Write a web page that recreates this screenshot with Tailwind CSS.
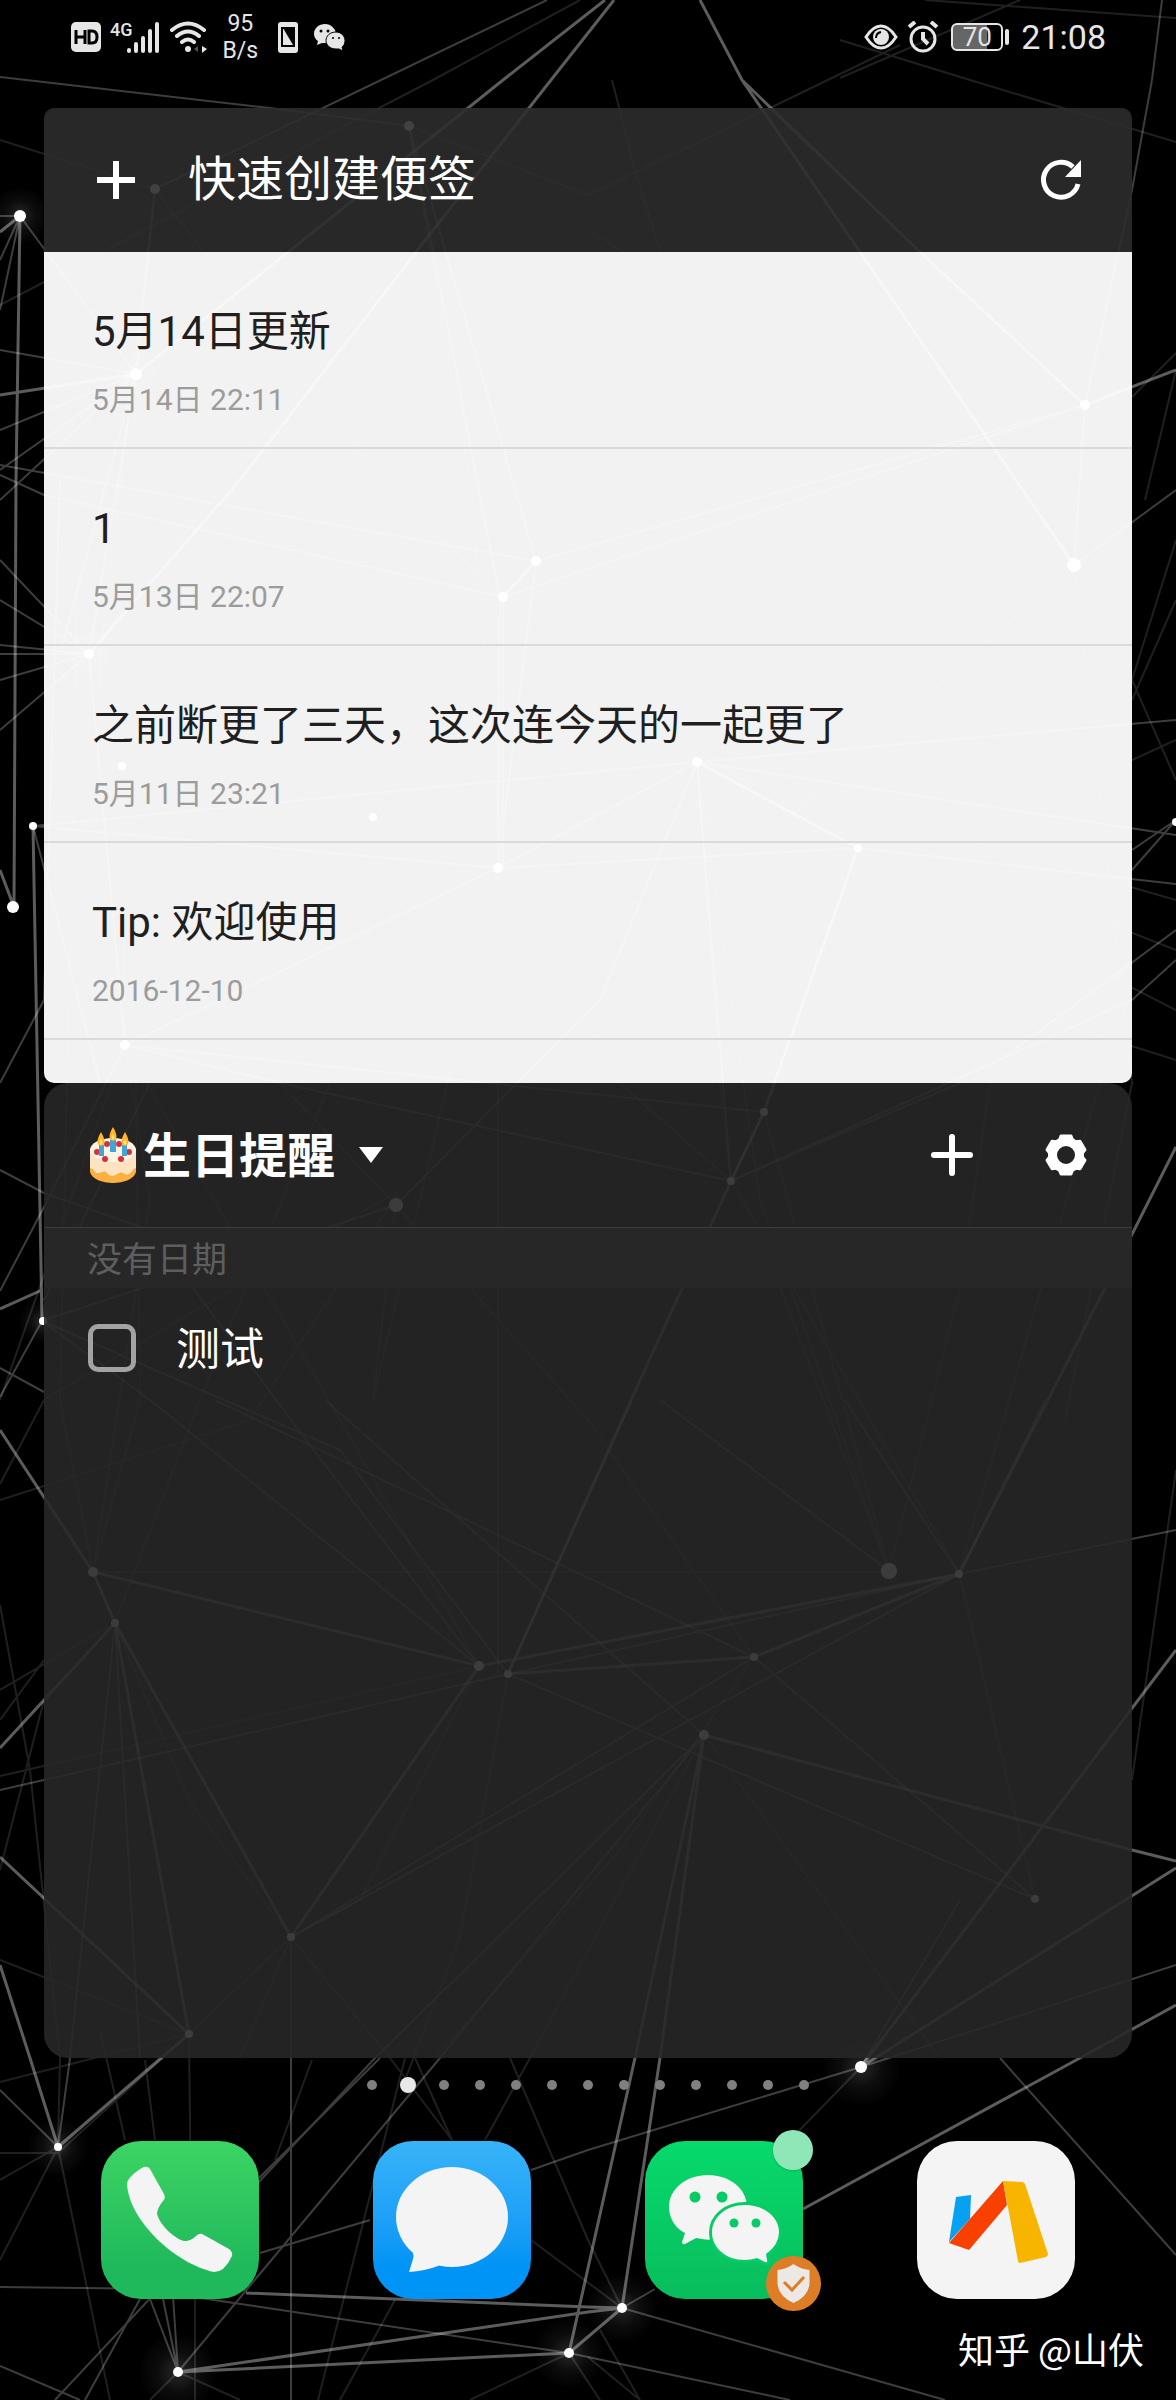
<!DOCTYPE html>
<html lang="zh-CN">
<head>
    <meta charset="UTF-8">
    <meta name="viewport" content="width=device-width, initial-scale=1.0">
    <script src="https://cdn.jsdelivr.net/npm/@tailwindcss/browser@4"></script>
    <title>桌面</title>
</head>
<body class="bg-black font-['Roboto','Noto_Sans_CJK_SC',sans-serif] text-white">
<div class="relative isolate flex min-h-screen flex-col overflow-hidden">

    <!-- wallpaper -->
    <svg class="absolute inset-0 -z-10 h-full w-full" viewBox="0 0 1176 2400" preserveAspectRatio="xMidYMin slice" fill="none" stroke="#fff" aria-hidden="true">
        <defs>
            <radialGradient id="glow">
                <stop offset="0" stop-color="#fff" stop-opacity=".16"/>
                <stop offset=".5" stop-color="#fff" stop-opacity=".05"/>
                <stop offset="1" stop-color="#fff" stop-opacity="0"/>
            </radialGradient>
        </defs>
        <!-- faint -->
        <g stroke-width="2" opacity=".12">
            <path d="M0 140L155 189M0 305L433 80L580 0M925 0L1176 18M840 40L970 80L1176 142M840 78L1020 0M588 195L770 108L900 45M612 80L635 170L715 430M155 189L380 480L503 597M155 189L100 654L93 1000M409 126L470 480L503 868M1132 397L1176 353M1176 370L1145 500"/>
            <path d="M588 230L970 470M409 126L588 195M89 654L409 252M1074 565L1132 1083L1065 1420M1074 565L697 900M536 561L764 900M697 762L1176 900M697 762L1176 950M858 848L1176 1010M1176 540L1132 680L1176 780M1176 600L1132 700M1132 760L1176 740"/>
            <path d="M498 868L860 960L1176 1060M498 868L373 1400L396 1205M498 868L620 1083L731 1181M498 868V1674M697 762L720 1083L731 1181M697 762L760 1200L889 1571M122 766L125 1045M80 480L60 1400L93 1572M125 1045L0 1400M125 1045L150 1200L93 1572M136 1083L140 1400L93 1572M125 1045L340 1420L479 1666M280 1083L396 1205L588 1420L754 1657M330 1083L200 1400L115 1623"/>
            <path d="M731 1181L960 1574L1035 1899M764 1112L889 1571M780 1288L889 1571M990 1083L960 1288L889 1571M1100 1083L959 1574M0 1500L250 1420L400 1190M0 1484L44 1400L400 1190M93 1572H889M115 1623L0 1690M93 1572L189 1800L291 1937M0 1605L30 1770L60 2058L58 2147M0 1776L479 1666M0 1720L44 1660M0 1870L44 1700"/>
            <path d="M754 1657L620 1850L435 2058M704 1735L530 2058M704 1735L940 2058M508 1674L460 1937L405 2080M479 1666L360 1900L291 1937L189 2034M291 1937L390 2058L452 2140M959 1574L1035 1899M1176 1470L1132 1780M291 1937L240 2058M0 1960L189 2034M0 2082L189 2034M0 2153H58L189 2034M0 2180L58 2147M189 2034L192 2299M100 2030L125 2140M145 2060L155 2140"/>
            <path d="M58 2147L110 2400M58 2147L0 2260M415 2058L452 2140M530 2058L485 2140M510 2058L588 2240M405 2058L318 2400M312 2060L275 2160M531 2240L622 2308M395 2300L340 2400M178 2372L240 2400M178 2372L150 2400M569 2353L470 2400M569 2353L600 2400M640 2400L600 2330M861 2067L790 2140M588 2240L622 2308M195 2299L195 2400M588 2357L640 2400"/>
        </g>
        <!-- middle -->
        <g stroke-width="2" opacity=".24">
            <path d="M0 77L270 108L409 126M155 189L381 80L547 0M1152 80L1162 0M1152 80L1132 190L1085 405M409 126L500 600L498 868M409 126L536 561M20 216H0M20 216L0 260M20 216L0 310M20 216L136 374M136 374L0 350M136 374L0 430M136 374L0 470M136 374L60 654M155 189L136 374M136 374L0 500"/>
            <path d="M0 465L536 561M0 475L44 495L503 597M536 561L1085 405L503 597M536 561L498 868M503 597V868M1085 405L1074 565M1074 565L1176 490M89 654L0 560M89 654L0 600M89 654L0 645M89 654H0M89 654L0 680M89 654L0 730M89 654L136 374M33 826L697 762L1176 720M697 762L498 868M697 762L1176 835M858 848L1176 884M1176 820L1132 870M1176 820L1132 850M1176 960L1132 1000L731 1181"/>
            <path d="M33 826L498 868L858 848M33 826L100 1083M498 868L125 1045M125 1045L764 1112M125 1045L280 1083L731 1181M697 762L731 1181M89 654L125 1045M60 480L44 1000L0 1083M0 1170L44 1193L150 1230L291 1420L479 1666M764 1112L731 1181L1000 1060L1176 930M731 1181L960 1083M42 1321L0 1397M0 1368L44 1392M0 1291L44 1207L125 1045M42 1321L396 1205L600 1000L697 762M42 1321L150 1400L479 1666"/>
            <path d="M150 1083L44 1300M42 1321L340 1450L508 1674M325 1400L704 1735M215 1400L754 1657M632 1400L508 1674M660 1400L889 1571M845 1400L959 1574M1045 1400L959 1574L1176 1530M959 1574L291 1937M754 1657L291 1937M508 1674L1035 1899L754 1657M0 1790L508 1674L959 1574M115 1623L70 2058L58 2147M115 1623L140 2058M704 1735L375 2058L55 2400M704 1735L440 2058L178 2372"/>
            <path d="M380 2058L259 2178M260 2253L370 2220M531 2170L588 2150L861 2067M0 2090L58 2147M178 2372L150 2299M178 2372L163 2299M178 2372L170 2250M0 2366L80 2400M85 2400L140 2299M0 2287L246 2290M200 2298L569 2353L588 2357L790 2400M622 2308L945 2400M1000 2058L1176 2255M1176 1965L861 2067M861 2067L960 1900M622 2308L655 2289M291 1937V2400"/>
        </g>
        <!-- bright -->
        <g stroke-width="3" opacity=".36">
            <path d="M605 0L503 80L136 374M614 0L551 80L416 252L240 480L89 654M700 0L742 80L860 252L1074 565M742 80L920 252L1085 405L1176 370M20 216L16 480L14 907L0 870M20 216L0 232M136 374L0 395M503 597L536 561M33 826L42 1321M858 848L764 1112L731 1181M697 762L858 848M0 1309L42 1290M1176 1147L1105 1288L959 1574M731 1181L622 1420L508 1674"/>
            <path d="M0 1430L93 1572L479 1666L959 1574L754 1657L508 1674M93 1572L115 1623L0 1748M115 1623L291 1937M115 1623L189 2034M479 1666L291 1937M704 1735L1132 1850L1176 1861M1176 1650L861 2067L1176 1868M1176 2005L1080 2058L803 2209M0 1857L189 2034L58 2147M0 1965L30 2058L58 2147M704 1735L635 2058L569 2353M704 1735L660 2058L622 2308"/>
            <path d="M178 2372L569 2353L622 2308M178 2372L588 2312L622 2308M246 2293L588 2307L622 2308"/>
        </g>
        <g fill="url(#glow)" stroke="none">
            <circle cx="20" cy="216" r="30"/><circle cx="136" cy="374" r="50"/><circle cx="89" cy="654" r="50"/><circle cx="58" cy="2147" r="30"/>
            <circle cx="178" cy="2372" r="40"/><circle cx="569" cy="2353" r="36"/><circle cx="622" cy="2308" r="36"/><circle cx="861" cy="2067" r="40"/>
            <circle cx="42" cy="1321" r="24"/><circle cx="889" cy="1571" r="16"/><circle cx="396" cy="1205" r="14"/>
        </g>
        <g fill="#fff" stroke="none">
            <circle cx="20" cy="216" r="6"/><circle cx="136" cy="374" r="6"/><circle cx="409" cy="126" r="5"/><circle cx="155" cy="189" r="5"/>
            <circle cx="1085" cy="405" r="5"/><circle cx="536" cy="561" r="5"/><circle cx="503" cy="597" r="5"/><circle cx="1074" cy="565" r="7"/>
            <circle cx="89" cy="654" r="5"/><circle cx="33" cy="826" r="4"/><circle cx="122" cy="766" r="4"/><circle cx="373" cy="817" r="4"/>
            <circle cx="13" cy="907" r="6"/><circle cx="697" cy="762" r="5"/><circle cx="498" cy="868" r="5"/><circle cx="858" cy="848" r="4"/>
            <circle cx="125" cy="1045" r="5"/><circle cx="396" cy="1205" r="7"/><circle cx="764" cy="1112" r="4"/><circle cx="731" cy="1181" r="4"/>
            <circle cx="43" cy="1321" r="4"/><circle cx="93" cy="1572" r="5"/><circle cx="115" cy="1623" r="4"/><circle cx="479" cy="1666" r="5"/>
            <circle cx="508" cy="1674" r="4"/><circle cx="754" cy="1657" r="4"/><circle cx="889" cy="1571" r="8"/><circle cx="959" cy="1574" r="4"/>
            <circle cx="704" cy="1735" r="5"/><circle cx="1035" cy="1899" r="4"/><circle cx="291" cy="1937" r="4"/><circle cx="189" cy="2034" r="4"/>
            <circle cx="861" cy="2067" r="6"/><circle cx="58" cy="2147" r="4"/><circle cx="178" cy="2372" r="5"/><circle cx="569" cy="2353" r="5"/>
            <circle cx="622" cy="2308" r="5"/><circle cx="1176" cy="822" r="4"/>
        </g>
    </svg>

    <!-- status bar -->
    <header class="flex h-[108px] items-start justify-between px-[70px] text-[#e6e6e6]">
        <div class="flex h-[74px] items-center">
            <svg class="mr-2 size-8" viewBox="0 0 32 32" role="img" aria-label="HD">
                <rect x="1" y="1" width="30" height="30" rx="5" fill="currentColor"/>
                <path d="M6 9v14M15 9v14M6 16h9M19 10v12h3q5 0 5-6t-5-6z" fill="none" stroke="#000" stroke-width="3"/>
            </svg>
            <div class="mr-2 flex">
                <span class="-mr-2 text-[18px] leading-none font-medium">4G</span>
                <svg class="h-8 w-9" viewBox="0 0 36 32" fill="none" stroke="currentColor" stroke-width="4" stroke-linecap="round" aria-hidden="true">
                    <path d="M4 29v1M11 23v7M18 17v13M25 10v20M32 3v27"/>
                </svg>
            </div>
            <svg class="h-8 w-[38px]" viewBox="0 0 38 32" fill="none" stroke="currentColor" stroke-width="4" stroke-linecap="round" aria-hidden="true">
                <path d="M3 9Q19-4 35 9M8 15Q19 6 30 15M13 21Q19 16 25 21"/>
                <circle cx="19" cy="28" r="3" fill="currentColor" stroke="none"/>
                <path d="M33 25l5 3-5 4z" fill="currentColor" stroke="none"/>
                <path d="M25 28l4-3v6z" fill="#555" stroke="none"/>
            </svg>
            <p class="mx-4 text-center text-[23px] leading-[27px]">95<br>B/s</p>
            <svg class="ml-1 h-8 w-5" viewBox="0 0 20 32" aria-hidden="true">
                <rect y="1" width="20" height="31" rx="3" fill="currentColor"/>
                <path d="M4 7h12v18H4z" fill="none" stroke="#000" stroke-width="2"/>
                <path d="M5 7l10 17V7z" fill="#000"/>
            </svg>
            <svg class="ml-4 h-7 w-8" viewBox="0 0 32 28" fill="currentColor" aria-hidden="true">
                <path d="M11 1C5 1 0 5 0 11c0 3 2 6 4 7l-1 4 5-2h3C18 20 22 16 22 11S17 1 11 1z"/>
                <path d="M22 9c-6 0-10 4-10 8.500S16 26 22 26h3l4 2-1-4c2-1 3-4 3-6.500C31 13 27 9 22 9z" stroke="#000"/>
                <g fill="#000"><circle cx="7" cy="8" r="1.500"/><circle cx="14" cy="8" r="1.500"/><circle cx="19" cy="15" r="1"/><circle cx="25" cy="15" r="1"/></g>
            </svg>
        </div>
        <div class="flex h-[74px] items-center">
            <svg class="mr-2 h-8 w-9" viewBox="0 0 36 32" fill="none" stroke="currentColor" stroke-width="3" aria-hidden="true">
                <path d="M3 16Q10 5 18 5t15 11Q26 27 18 27T3 16z"/>
                <circle cx="18" cy="16" r="8" fill="currentColor" stroke="none"/>
                <path d="M13 17q0-5 5-6" stroke="#000" stroke-width="2"/>
            </svg>
            <svg class="mr-3 h-8 w-8" viewBox="0 0 32 32" fill="none" stroke="currentColor" stroke-width="3" aria-hidden="true">
                <circle cx="16" cy="18" r="12"/>
                <path d="M16 11v7l5 5M2 6l6-5M24 1l6 5" stroke-width="4"/>
            </svg>
            <div class="flex h-7 w-[52px] items-center justify-center rounded-md border-2 border-current bg-linear-to-r from-[#666] from-70% to-transparent to-70% text-[26px] leading-none">70</div>
            <span class="mr-3 ml-[2px] h-4 w-1 rounded-sm bg-current"></span>
            <time class="text-[34px] leading-none">21:08</time>
        </div>
    </header>

    <main class="flex flex-1 flex-col px-11">
        <!-- notes widget -->
        <section class="overflow-hidden rounded-[10px]">
            <div class="flex h-36 items-center bg-[#2c2c2c]/90 pr-[50px] pl-[52px]">
                <button type="button" class="flex items-center gap-[52px] text-[48px] leading-none">
                    <svg class="size-10" viewBox="0 0 40 40" stroke="currentColor" stroke-width="6" aria-hidden="true"><path d="M1 20h38M20 1v38"/></svg>
                    快速创建便签
                </button>
                <button type="button" class="ml-auto" aria-label="刷新">
                    <svg class="size-11" viewBox="0 0 44 44" aria-hidden="true">
                        <path d="M40 26A17.500 17.500 0 1 1 35 9" fill="none" stroke="currentColor" stroke-width="5"/>
                        <path d="M43 2v17H27z" fill="currentColor"/>
                    </svg>
                </button>
            </div>
            <ul class="bg-white/95 pb-[43px] text-[#1f1f1f]">
                <li class="flex h-[197px] flex-col border-b-2 border-[#dadada] px-12 pt-[52px]">
                    <h2 class="text-[42px] leading-[56px]">5月14日更新</h2>
                    <time class="mt-5 text-[30px] leading-10 text-[#9c9c9c]">5月14日 22:11</time>
                </li>
                <li class="flex h-[197px] flex-col border-b-2 border-[#dadada] px-12 pt-[52px]">
                    <h2 class="text-[42px] leading-[56px]">1</h2>
                    <time class="mt-5 text-[30px] leading-10 text-[#9c9c9c]">5月13日 22:07</time>
                </li>
                <li class="flex h-[197px] flex-col border-b-2 border-[#dadada] px-12 pt-[52px]">
                    <h2 class="text-[42px] leading-[56px]">之前断更了三天，这次连今天的一起更了</h2>
                    <time class="mt-5 text-[30px] leading-10 text-[#9c9c9c]">5月11日 23:21</time>
                </li>
                <li class="flex h-[197px] flex-col border-b-2 border-[#dadada] px-12 pt-[52px]">
                    <h2 class="text-[42px] leading-[56px]">Tip: 欢迎使用</h2>
                    <time class="mt-5 text-[30px] leading-10 text-[#9c9c9c]">2016-12-10</time>
                </li>
            </ul>
        </section>

        <!-- todo widget -->
        <section class="flex-1 overflow-hidden rounded-3xl bg-[#272727]/90">
            <div class="flex h-36 items-center pr-11 pl-[45px]">
                <button type="button" class="flex items-center text-[48px] leading-none font-bold">
                    <svg class="mr-[6px] h-14 w-12" viewBox="0 0 48 56" aria-hidden="true">
                        <path d="M1 22v23c2 7 12 11 23 11s21-4 23-11V22z" fill="#fbb040"/>
                        <path d="M1 22v19c4 0 4 6 9 5s5-3 9 1 7 1 11-1 6 3 10 1 3-5 7-6V22z" fill="#fde3c0"/>
                        <ellipse cx="24" cy="23" rx="23" ry="12" fill="#fff3e2"/>
                        <g fill="#d9303e"><circle cx="8" cy="25" r="3"/><circle cx="16" cy="32" r="3"/><circle cx="32" cy="32" r="3"/><circle cx="40" cy="25" r="3"/><circle cx="18" cy="17" r="3"/><circle cx="30" cy="17" r="3"/></g>
                        <path d="M10 18h5v11h-5zM21 13h6v12h-6zM33 18h5v11h-5z" fill="#3ea6d8"/>
                        <path d="M12 5q7 12 0 14-7-2 0-14zM24 0q7 12 0 14-7-2 0-14zM36 5q7 12 0 14-7-2 0-14z" fill="#ffb52e"/>
                        <path d="M12 12q3 5 0 6-3-1 0-6zM24 7q3 5 0 6-3-1 0-6zM36 12q3 5 0 6-3-1 0-6z" fill="#ffe36b"/>
                    </svg>
                    <span class="pt-1">生日提醒</span>
                    <svg class="ml-6 h-4 w-6" viewBox="0 0 24 16" fill="currentColor" aria-hidden="true"><path d="M0 0h24L12 16z"/></svg>
                </button>
                <button type="button" class="mr-[71px] ml-auto" aria-label="添加">
                    <svg class="size-[42px]" viewBox="0 0 42 42" stroke="currentColor" stroke-width="6" stroke-linecap="round" aria-hidden="true"><path d="M3 21h36M21 3v36"/></svg>
                </button>
                <button type="button" aria-label="设置">
                    <svg class="size-[44px]" viewBox="0 0 44 44" fill="none" stroke="currentColor" aria-hidden="true">
                        <circle cx="22" cy="22" r="13.500" stroke-width="9"/>
                        <g fill="currentColor" stroke-width="3" stroke-linejoin="round">
                            <path id="tooth" d="M17 3h10l3 8H14z"/>
                            <use href="#tooth" transform="rotate(60 22 22)"/>
                            <use href="#tooth" transform="rotate(120 22 22)"/>
                            <use href="#tooth" transform="rotate(180 22 22)"/>
                            <use href="#tooth" transform="rotate(240 22 22)"/>
                            <use href="#tooth" transform="rotate(300 22 22)"/>
                        </g>
                    </svg>
                </button>
            </div>
            <h3 class="h-[61px] border-t border-[#3c3c3c] bg-[#282828]/80 pl-[43px] text-[35px] leading-[66px] text-[#5e5e5e]">没有日期</h3>
            <label class="flex h-[120px] items-center gap-10 px-11 text-[44px] leading-none">
                <input type="checkbox" class="size-12 appearance-none rounded-[10px] border-[5px] border-[#a3a3a3] checked:bg-[#a3a3a3]">
                <span class="pt-1">测试</span>
            </label>
        </section>
    </main>

    <!-- page dots -->
    <div class="flex h-[83px] items-start justify-center pt-[18px]">
        <div class="flex h-[18px] items-center">
            <span class="mx-[13px] size-[10px] rounded-full bg-[#808080]"></span>
            <span class="mx-[10px] size-4 rounded-full bg-[#e8e8e8]"></span>
            <span class="mx-[13px] size-[10px] rounded-full bg-[#808080]"></span>
            <span class="mx-[13px] size-[10px] rounded-full bg-[#808080]"></span>
            <span class="mx-[13px] size-[10px] rounded-full bg-[#808080]"></span>
            <span class="mx-[13px] size-[10px] rounded-full bg-[#808080]"></span>
            <span class="mx-[13px] size-[10px] rounded-full bg-[#808080]"></span>
            <span class="mx-[13px] size-[10px] rounded-full bg-[#808080]"></span>
            <span class="mx-[13px] size-[10px] rounded-full bg-[#808080]"></span>
            <span class="mx-[13px] size-[10px] rounded-full bg-[#808080]"></span>
            <span class="mx-[13px] size-[10px] rounded-full bg-[#808080]"></span>
            <span class="mx-[13px] size-[10px] rounded-full bg-[#808080]"></span>
            <span class="mx-[13px] size-[10px] rounded-full bg-[#808080]"></span>
        </div>
    </div>

    <!-- dock -->
    <nav class="flex justify-between px-[101px]">
        <a href="#" aria-label="电话" class="size-[158px] rounded-[40px] bg-linear-to-b from-[#3cd463] to-[#1fb95c] to-80%">
            <svg viewBox="0 0 158 158" fill="#f4f4f4" aria-hidden="true">
                <path d="M26 43C26 37 38 28 43 26Q47 25 49 28L63 53Q65 57 62 60Q57 66 56 72C57 82 74 99 84 100Q90 100 95 95Q99 91 103 94L128 108Q132 111 131 115Q128 122 122 128Q118 131 113 131C75 123 28 80 26 43Z"/>
            </svg>
        </a>
        <a href="#" aria-label="信息" class="size-[158px] rounded-[40px] bg-linear-to-b from-[#38b3f8] to-[#0094f6] to-80%">
            <svg viewBox="0 0 158 158" fill="#f4f4f4" aria-hidden="true">
                <ellipse cx="79" cy="76" rx="56" ry="50"/>
                <path d="M36 106Q42 112 40 118L36 131Q52 130 65 125L79 110z"/>
            </svg>
        </a>
        <a href="#" aria-label="微信" class="relative size-[158px] rounded-[40px] bg-linear-to-b from-[#07d96b] to-[#08bd5d]">
            <svg viewBox="0 0 158 158" fill="#f4f4f4" aria-hidden="true">
                <path d="M63 34C41 34 24 48 24 66C24 77 30 87 40 92L37 101Q37 104 40 103L51 97Q85 104 96 86Q102 78 102 66C102 48 85 34 63 34Z"/>
                <path d="M100 64C81 64 67 76 67 91.500S81 119 100 119Q106 119 112 117L120 121Q123 122 122 119L121 113Q134 104 134 91C134 76 119 64 100 64Z" stroke="#07cb65" stroke-width="6" paint-order="stroke"/>
                <g fill="#07cb65"><circle cx="50" cy="56" r="5.500"/><circle cx="77" cy="56" r="5.500"/><circle cx="89" cy="82" r="4.500"/><circle cx="111" cy="82" r="4.500"/></g>
            </svg>
            <span class="absolute -top-[11px] -right-[10px] size-10 rounded-full bg-[#8fe7b8] shadow"></span>
            <svg class="absolute -right-[18px] -bottom-[12px] size-[55px]" viewBox="0 0 55 55" aria-hidden="true">
                <circle cx="27.500" cy="27.500" r="27.500" fill="#dd7e26"/>
                <path d="M27.500 8Q34 13 43.500 14V27Q43 40 27.500 47Q12 40 11.500 27V14Q21 13 27.500 8Z" fill="#ebe8e5"/>
                <path d="M18 26l8 8 12-13" fill="none" stroke="#dd7e26" stroke-width="3"/>
            </svg>
        </a>
        <a href="#" aria-label="应用" class="size-[158px] rounded-[40px] bg-[#f4f4f4]">
            <svg viewBox="0 0 158 158" aria-hidden="true">
                <path d="M39 56l15-2-1 24-21 23z" fill="#08a0f0"/>
                <path d="M86 40l4 24-38 45-20-7z" fill="#f84000"/>
                <path d="M86 40l19 1q2 0 3 2l23 70q0 2-2 3l-26 6q-2 0-2-2z" fill="#f7b500"/>
            </svg>
        </a>
    </nav>

    <p class="h-[101px] pt-6 pr-8 text-right font-['Noto_Sans_CJK_SC',sans-serif] text-[36px] leading-[50px]">知乎 @山伏</p>
</div>
</body>
</html>
